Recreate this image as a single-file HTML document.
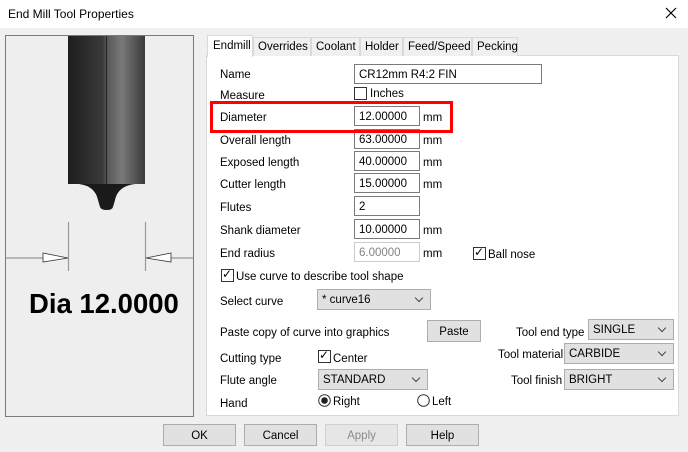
<!DOCTYPE html>
<html><head><style>
*{box-sizing:border-box;margin:0;padding:0}
body{width:688px;height:452px;background:#f0f0f0;font-family:"Liberation Sans",sans-serif;font-size:11.5px;color:#000;position:relative;overflow:hidden}
.a{position:absolute;white-space:nowrap}
.t{margin-top:2px}
.fld{position:absolute;background:#fff;border:1px solid #7a7a7a;padding:4px 0 0 4px;height:20px;font-size:11.5px}
.cb{position:absolute;width:13px;height:13px;border:1px solid #333;background:#fff}
.cmb{position:absolute;background:#e1e1e1;border:1px solid #adadad;padding:4px 0 0 4px;font-size:11.5px}
.cmb:after{content:"";position:absolute;right:8px;top:5px;width:5px;height:5px;border-right:1px solid #444;border-bottom:1px solid #444;transform:rotate(45deg)}
.btn{position:absolute;background:#e1e1e1;border:1px solid #adadad;text-align:center;padding-top:5px;height:22px}
.tab{position:absolute;top:37px;height:19px;border:1px solid #d9d9d9;border-bottom:none;background:#f0f0f0;padding:3px 0 0 4px}
</style></head><body>
<div class="a" style="left:0;top:0;width:688px;height:28px;background:#fff"></div>
<div class="a" style="left:8px;top:7px;font-size:12px">End Mill Tool Properties</div>
<svg class="a" style="left:665px;top:7px" width="12" height="12"><path d="M1 1L11 11M11 1L1 11" stroke="#000" stroke-width="1.2"/></svg>

<div class="a" style="left:5px;top:35px;width:189px;height:382px;background:#eee;border:1px solid #7a7a7a"></div>
<svg class="a" style="left:0;top:0" width="200" height="420">
<defs><linearGradient id="g" x1="0" x2="1"><stop offset="0" stop-color="#1e1e1e"/><stop offset=".45" stop-color="#3a3a3a"/><stop offset=".5" stop-color="#555"/><stop offset=".7" stop-color="#7a7a7a"/><stop offset="1" stop-color="#3a3a3a"/></linearGradient></defs>
<rect x="68" y="36" width="77" height="148" fill="url(#g)"/>
<line x1="106.5" y1="36" x2="106.5" y2="184" stroke="#222"/>
<path d="M79 184 L135 184 Q118 186 115 200 L113 207 Q112 210 107 210 Q101 210 100 207 L98 200 Q95 186 79 184Z" fill="#1a1a1a"/>
<g stroke="#999" stroke-width="1.2" fill="none">
<line x1="68.5" y1="222" x2="68.5" y2="271"/><line x1="145.5" y1="222" x2="145.5" y2="271"/>
<line x1="6" y1="258" x2="43" y2="258"/><line x1="171" y1="258" x2="193" y2="258"/>
</g>
<path d="M43 253 L43 262 L68 258Z M171 253 L171 262 L146 258Z" fill="#fff" stroke="#333" stroke-width=".8"/>
</svg>
<div class="a" style="left:29px;top:288px;font-size:27.5px;font-weight:bold">Dia 12.0000</div>

<div class="a" style="left:206px;top:55px;width:473px;height:361px;background:#fff;border:1px solid #d9d9d9"></div>
<div class="tab" style="left:253px;width:58px">Overrides</div>
<div class="tab" style="left:311px;width:49px">Coolant</div>
<div class="tab" style="left:360px;width:43px">Holder</div>
<div class="tab" style="left:403px;width:69px">Feed/Speed</div>
<div class="tab" style="left:472px;width:46px">Pecking</div>
<div class="a" style="left:207px;top:35px;width:46px;height:22px;background:#fff;border:1px solid #d9d9d9;border-bottom:none;padding:4px 0 0 5px">Endmill</div>

<div class="a t" style="left:220px;top:67px">Name</div>
<div class="fld" style="left:354px;top:64px;width:188px">CR12mm R4:2 FIN</div>
<div class="a t" style="left:220px;top:88px">Measure</div>
<div class="cb" style="left:354px;top:87px"></div><div class="a t" style="left:370px;top:86px">Inches</div>

<div class="a t" style="left:220px;top:110px">Diameter</div>
<div class="fld" style="left:354px;top:106px;width:66px">12.00000</div><div class="a t" style="left:423px;top:110px">mm</div>
<div class="a t" style="left:220px;top:133px">Overall length</div>
<div class="fld" style="left:354px;top:129px;width:66px">63.00000</div><div class="a t" style="left:423px;top:133px">mm</div>
<div class="a t" style="left:220px;top:155px">Exposed length</div>
<div class="fld" style="left:354px;top:151px;width:66px">40.00000</div><div class="a t" style="left:423px;top:155px">mm</div>
<div class="a t" style="left:220px;top:177px">Cutter length</div>
<div class="fld" style="left:354px;top:173px;width:66px">15.00000</div><div class="a t" style="left:423px;top:177px">mm</div>
<div class="a t" style="left:220px;top:200px">Flutes</div>
<div class="fld" style="left:354px;top:196px;width:66px">2</div>
<div class="a t" style="left:220px;top:223px">Shank diameter</div>
<div class="fld" style="left:354px;top:219px;width:66px">10.00000</div><div class="a t" style="left:423px;top:223px">mm</div>
<div class="a t" style="left:220px;top:246px">End radius</div>
<div class="fld" style="left:354px;top:242px;width:66px;border-color:#ccc;color:#838383">6.00000</div><div class="a t" style="left:423px;top:246px">mm</div>
<div class="a" style="left:210px;top:101px;width:243px;height:32px;border:3px solid #f00"></div>

<div class="cb" style="left:473px;top:247px"></div><div class="a" style="left:474px;top:245px;font-size:12px">✓</div><div class="a t" style="left:488px;top:247px">Ball nose</div>
<div class="cb" style="left:221px;top:269px"></div><div class="a" style="left:222px;top:267px;font-size:12px">✓</div><div class="a t" style="left:236px;top:269px">Use curve to describe tool shape</div>

<div class="a t" style="left:220px;top:294px">Select curve</div>
<div class="cmb" style="left:317px;top:289px;width:114px;height:21px">* curve16</div>
<div class="a t" style="left:220px;top:325px">Paste copy of curve into graphics</div>
<div class="btn" style="left:427px;top:320px;width:54px">Paste</div>
<div class="a t" style="left:516px;top:325px">Tool end type</div>
<div class="cmb" style="left:588px;top:319px;width:86px;height:21px">SINGLE</div>
<div class="a t" style="left:220px;top:351px">Cutting type</div>
<div class="cb" style="left:318px;top:350px"></div><div class="a" style="left:319px;top:348px;font-size:12px">✓</div><div class="a t" style="left:333px;top:351px">Center</div>
<div class="a t" style="left:498px;top:347px">Tool material</div>
<div class="cmb" style="left:564px;top:343px;width:110px;height:21px">CARBIDE</div>
<div class="a t" style="left:220px;top:373px">Flute angle</div>
<div class="cmb" style="left:318px;top:369px;width:110px;height:21px">STANDARD</div>
<div class="a t" style="left:511px;top:373px">Tool finish</div>
<div class="cmb" style="left:564px;top:369px;width:110px;height:21px">BRIGHT</div>
<div class="a t" style="left:220px;top:396px">Hand</div>
<svg class="a" style="left:318px;top:394px" width="13" height="13"><circle cx="6.5" cy="6.5" r="5.8" fill="#fff" stroke="#333"/><circle cx="6.5" cy="6.5" r="3.3" fill="#222"/></svg>
<div class="a t" style="left:333px;top:394px">Right</div>
<svg class="a" style="left:417px;top:394px" width="13" height="13"><circle cx="6.5" cy="6.5" r="5.8" fill="#fff" stroke="#333"/></svg>
<div class="a t" style="left:432px;top:394px">Left</div>

<div class="btn" style="left:163px;top:424px;width:73px">OK</div>
<div class="btn" style="left:244px;top:424px;width:73px">Cancel</div>
<div class="btn" style="left:325px;top:424px;width:73px;border-color:#cfcfcf;color:#8a8a8a;background:#e6e6e6">Apply</div>
<div class="btn" style="left:406px;top:424px;width:73px">Help</div>
</body></html>
